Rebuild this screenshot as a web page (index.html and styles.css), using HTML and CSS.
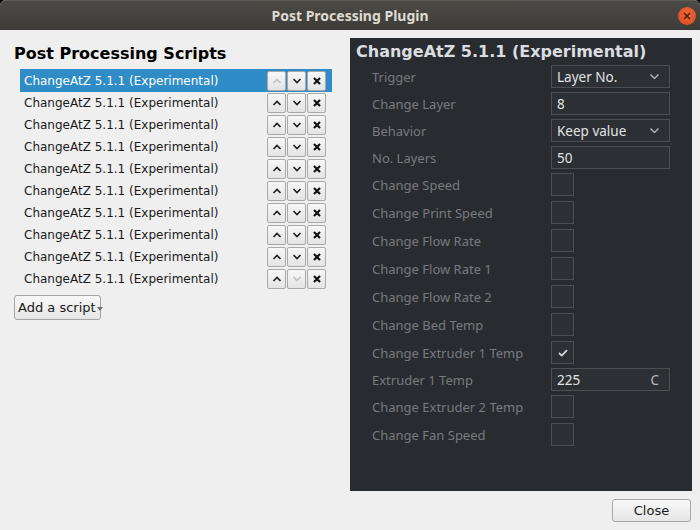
FILE: index.html
```html
<!DOCTYPE html>
<html>
<head>
<meta charset="utf-8">
<link rel="stylesheet" href="styles.css">
</head>
<body>
<div class="window">
  <div class="titlebar">
    <span class="title">Post Processing Plugin</span>
    <span class="wclose"><svg width="8" height="8" viewBox="0 0 8 8"><path d="M1 1L7 7M7 1L1 7" stroke="#3a1a10" stroke-width="1.3" fill="none"/></svg></span>
  </div>
  <div class="content">
    <div class="main">
      <div class="left">
        <h2 class="heading">Post Processing Scripts</h2>
        <ul class="list">
          <li class="row selected"><span class="name">ChangeAtZ 5.1.1 (Experimental)</span><span class="btns"><span class="ib dis"><svg width="10" height="6" viewBox="0 0 10 6"><path d="M1.5 5L5 1.5L8.5 5" /></svg></span><span class="ib"><svg width="10" height="6" viewBox="0 0 10 6"><path d="M1.5 1L5 4.5L8.5 1" /></svg></span><span class="ib"><svg class="x" width="8" height="8" viewBox="0 0 8 8"><path d="M1 1L7 7M7 1L1 7" /></svg></span></span></li>
          <li class="row"><span class="name">ChangeAtZ 5.1.1 (Experimental)</span><span class="btns"><span class="ib"><svg width="10" height="6" viewBox="0 0 10 6"><path d="M1.5 5L5 1.5L8.5 5" /></svg></span><span class="ib"><svg width="10" height="6" viewBox="0 0 10 6"><path d="M1.5 1L5 4.5L8.5 1" /></svg></span><span class="ib"><svg class="x" width="8" height="8" viewBox="0 0 8 8"><path d="M1 1L7 7M7 1L1 7" /></svg></span></span></li>
          <li class="row"><span class="name">ChangeAtZ 5.1.1 (Experimental)</span><span class="btns"><span class="ib"><svg width="10" height="6" viewBox="0 0 10 6"><path d="M1.5 5L5 1.5L8.5 5" /></svg></span><span class="ib"><svg width="10" height="6" viewBox="0 0 10 6"><path d="M1.5 1L5 4.5L8.5 1" /></svg></span><span class="ib"><svg class="x" width="8" height="8" viewBox="0 0 8 8"><path d="M1 1L7 7M7 1L1 7" /></svg></span></span></li>
          <li class="row"><span class="name">ChangeAtZ 5.1.1 (Experimental)</span><span class="btns"><span class="ib"><svg width="10" height="6" viewBox="0 0 10 6"><path d="M1.5 5L5 1.5L8.5 5" /></svg></span><span class="ib"><svg width="10" height="6" viewBox="0 0 10 6"><path d="M1.5 1L5 4.5L8.5 1" /></svg></span><span class="ib"><svg class="x" width="8" height="8" viewBox="0 0 8 8"><path d="M1 1L7 7M7 1L1 7" /></svg></span></span></li>
          <li class="row"><span class="name">ChangeAtZ 5.1.1 (Experimental)</span><span class="btns"><span class="ib"><svg width="10" height="6" viewBox="0 0 10 6"><path d="M1.5 5L5 1.5L8.5 5" /></svg></span><span class="ib"><svg width="10" height="6" viewBox="0 0 10 6"><path d="M1.5 1L5 4.5L8.5 1" /></svg></span><span class="ib"><svg class="x" width="8" height="8" viewBox="0 0 8 8"><path d="M1 1L7 7M7 1L1 7" /></svg></span></span></li>
          <li class="row"><span class="name">ChangeAtZ 5.1.1 (Experimental)</span><span class="btns"><span class="ib"><svg width="10" height="6" viewBox="0 0 10 6"><path d="M1.5 5L5 1.5L8.5 5" /></svg></span><span class="ib"><svg width="10" height="6" viewBox="0 0 10 6"><path d="M1.5 1L5 4.5L8.5 1" /></svg></span><span class="ib"><svg class="x" width="8" height="8" viewBox="0 0 8 8"><path d="M1 1L7 7M7 1L1 7" /></svg></span></span></li>
          <li class="row"><span class="name">ChangeAtZ 5.1.1 (Experimental)</span><span class="btns"><span class="ib"><svg width="10" height="6" viewBox="0 0 10 6"><path d="M1.5 5L5 1.5L8.5 5" /></svg></span><span class="ib"><svg width="10" height="6" viewBox="0 0 10 6"><path d="M1.5 1L5 4.5L8.5 1" /></svg></span><span class="ib"><svg class="x" width="8" height="8" viewBox="0 0 8 8"><path d="M1 1L7 7M7 1L1 7" /></svg></span></span></li>
          <li class="row"><span class="name">ChangeAtZ 5.1.1 (Experimental)</span><span class="btns"><span class="ib"><svg width="10" height="6" viewBox="0 0 10 6"><path d="M1.5 5L5 1.5L8.5 5" /></svg></span><span class="ib"><svg width="10" height="6" viewBox="0 0 10 6"><path d="M1.5 1L5 4.5L8.5 1" /></svg></span><span class="ib"><svg class="x" width="8" height="8" viewBox="0 0 8 8"><path d="M1 1L7 7M7 1L1 7" /></svg></span></span></li>
          <li class="row"><span class="name">ChangeAtZ 5.1.1 (Experimental)</span><span class="btns"><span class="ib"><svg width="10" height="6" viewBox="0 0 10 6"><path d="M1.5 5L5 1.5L8.5 5" /></svg></span><span class="ib"><svg width="10" height="6" viewBox="0 0 10 6"><path d="M1.5 1L5 4.5L8.5 1" /></svg></span><span class="ib"><svg class="x" width="8" height="8" viewBox="0 0 8 8"><path d="M1 1L7 7M7 1L1 7" /></svg></span></span></li>
          <li class="row"><span class="name">ChangeAtZ 5.1.1 (Experimental)</span><span class="btns"><span class="ib"><svg width="10" height="6" viewBox="0 0 10 6"><path d="M1.5 5L5 1.5L8.5 5" /></svg></span><span class="ib dis"><svg width="10" height="6" viewBox="0 0 10 6"><path d="M1.5 1L5 4.5L8.5 1" /></svg></span><span class="ib"><svg class="x" width="8" height="8" viewBox="0 0 8 8"><path d="M1 1L7 7M7 1L1 7" /></svg></span></span></li>
        </ul>
        <button class="add">Add a script<span class="tri"></span></button>
      </div>
      <div class="panel">
        <h3 class="ptitle">ChangeAtZ 5.1.1 (Experimental)</h3>
        <div class="form">
          <div class="frow field"><span class="lbl">Trigger</span><span class="ctl combo"><span>Layer No.</span><svg width="9" height="5" viewBox="0 0 9 5"><path d="M0.5 0.5L4.5 4.5L8.5 0.5"/></svg></span></div>
          <div class="frow field"><span class="lbl">Change Layer</span><span class="ctl text">8</span></div>
          <div class="frow field"><span class="lbl">Behavior</span><span class="ctl combo"><span>Keep value</span><svg width="9" height="5" viewBox="0 0 9 5"><path d="M0.5 0.5L4.5 4.5L8.5 0.5"/></svg></span></div>
          <div class="frow field"><span class="lbl">No. Layers</span><span class="ctl text">50</span></div>
          <div class="frow check"><span class="lbl">Change Speed</span><span class="cb"></span></div>
          <div class="frow check"><span class="lbl">Change Print Speed</span><span class="cb"></span></div>
          <div class="frow check"><span class="lbl">Change Flow Rate</span><span class="cb"></span></div>
          <div class="frow check"><span class="lbl">Change Flow Rate 1</span><span class="cb"></span></div>
          <div class="frow check"><span class="lbl">Change Flow Rate 2</span><span class="cb"></span></div>
          <div class="frow check"><span class="lbl">Change Bed Temp</span><span class="cb"></span></div>
          <div class="frow check before-field"><span class="lbl">Change Extruder 1 Temp</span><span class="cb"><svg width="10" height="8" viewBox="0 0 10 8"><path d="M1 4L3.8 6.6L9 1.2"/></svg></span></div>
          <div class="frow field"><span class="lbl">Extruder 1 Temp</span><span class="ctl text"><span>225</span><span>C</span></span></div>
          <div class="frow check"><span class="lbl">Change Extruder 2 Temp</span><span class="cb"></span></div>
          <div class="frow check"><span class="lbl">Change Fan Speed</span><span class="cb"></span></div>
        </div>
      </div>
    </div>
    <div class="footer"><button class="close">Close</button></div>
  </div>
</div>
</body>
</html>
```
FILE: styles.css
```css
* { box-sizing: border-box; }
html, body { margin: 0; padding: 0; }
body { width: 700px; height: 530px; background: #000; overflow: hidden; }

.window {
  width: 700px; height: 530px;
  display: flex; flex-direction: column;
  background: #efefef;
  border-radius: 6px 6px 0 0;
  overflow: hidden;
}

.titlebar {
  height: 30px; flex: none;
  background: linear-gradient(#4c4b46, #3c3b37);
  border-top: 1px solid #5c5b55;
  display: flex; align-items: center; justify-content: center;
  position: relative;
}
.title {
  font-family: "Noto Sans", sans-serif;
  font-weight: 700; font-size: 14px;
  color: #dfdbd2;
}
.wclose {
  position: absolute; right: 4px; top: 6px;
  width: 18px; height: 18px; border-radius: 50%;
  background: radial-gradient(circle at 50% 40%, #f0683a, #d9481a);
  display: flex; align-items: center; justify-content: center;
}

.content { flex: 1; display: flex; flex-direction: column; }
.main { display: flex; padding-top: 8px; height: 461px; }

.left { width: 350px; padding-left: 14px; display: flex; flex-direction: column; align-items: flex-start; }
.heading {
  margin: 6px 0 0 0;
  font-family: "DejaVu Sans", sans-serif; font-weight: 700; font-size: 16px;
  line-height: 20px; color: #000;
}
.list { list-style: none; margin: 5px 0 0 6px; padding: 0; width: 312px; }
.row {
  height: 22px; display: flex; align-items: flex-start; justify-content: space-between;
  padding: 0 6px 0 4px;
  font-family: "DejaVu Sans", sans-serif; font-size: 12px; color: #1a1a1a;
}
.row .name { line-height: 23px; padding-top: 1px; }
.row.selected { background: #308cc6; color: #fff; height: 23px; margin-bottom: -1px; }
.btns { display: flex; gap: 1px; margin-top: 2px; }
.ib {
  width: 19px; height: 20px;
  border: 1px solid #a9a9a9; border-radius: 2px;
  background: linear-gradient(#f7f7f7, #e4e4e4);
  display: flex; align-items: center; justify-content: center;
}
.ib svg path { stroke: #1e1e1e; stroke-width: 1.6; fill: none; }
.ib svg.x path { stroke-width: 2.2; stroke: #111; }
.ib.dis svg path { stroke: #c2c2c2; }

.add {
  margin-top: 6px;
  height: 25px; width: 87px; padding: 0 0 0 3px;
  border: 1px solid #a4a4a4; border-radius: 3px;
  background: linear-gradient(#f8f8f8, #e6e6e6);
  font-family: "DejaVu Sans", sans-serif; font-size: 13px; color: #1a1a1a;
  white-space: nowrap;
  display: flex; align-items: center;
}
.tri {
  width: 0; height: 0; margin-left: 1px; margin-top: 2px;
  border-left: 3.5px solid transparent; border-right: 3.5px solid transparent;
  border-top: 4px solid #707070;
}

.panel {
  width: 342px; height: 453px;
  background: #282b2f;
  padding: 0 0 0 6px;
}
.ptitle {
  margin: 4px 0 0 0;
  font-family: "DejaVu Sans", sans-serif; font-weight: 700; font-size: 16px;
  line-height: 20px; color: #dcdde0;
}
.form { margin: 3px 0 0 16px; }
.frow { display: flex; align-items: center; }
.frow.field { height: 23px; margin-bottom: 4px; }
.frow.check { height: 23px; margin-bottom: 5px; }
.frow.check.before-field { margin-bottom: 4px; }
.lbl {
  width: 179px;
  font-family: "Noto Sans", sans-serif; font-size: 13px; color: #777b80;
}
.ctl {
  width: 119px; height: 23px;
  border: 1px solid #4b4e53; background: #2c2f33;
  display: flex; align-items: center; justify-content: space-between;
  padding: 0 10px 0 5px;
  font-family: "Noto Sans", sans-serif; font-size: 13.5px; color: #e2e3e5;
}
.ctl.text > span:last-child:not(:first-child) { color: #b8babd; }
.combo svg path { stroke: #b8babd; stroke-width: 1.3; fill: none; }
.cb {
  width: 23px; height: 23px;
  border: 1px solid #4b4e53; background: #2c2f33;
  display: flex; align-items: center; justify-content: center;
}
.cb svg path { stroke: #d6d7d9; stroke-width: 1.8; fill: none; }

.footer { display: flex; justify-content: flex-end; padding: 8px 9px 0 0; }
.close {
  width: 79px; height: 23px;
  border: 1px solid #a8a8a8; border-radius: 3px;
  background: linear-gradient(#f8f8f8, #e6e6e6);
  font-family: "DejaVu Sans", sans-serif; font-size: 13px; color: #1a1a1a;
  padding: 0;
}
```
